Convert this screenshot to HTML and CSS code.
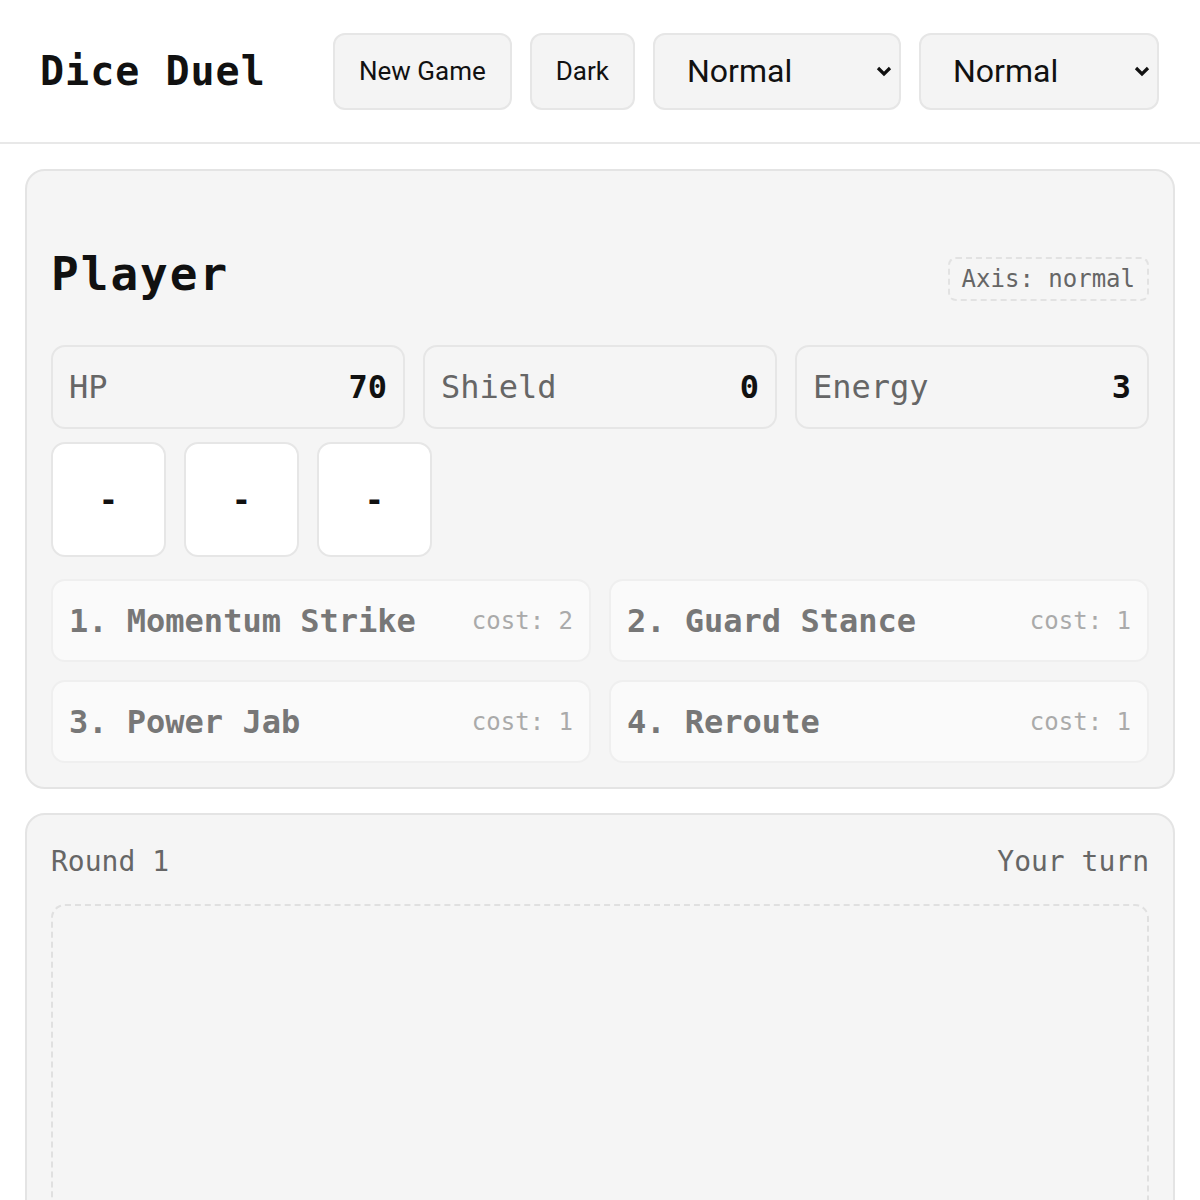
FILE: index.html
```html
<!DOCTYPE html>
<html>
<head lang="en">
    <meta charset="UTF-8">
    <title>Dice Duel</title>
    <link rel="stylesheet" href="styles.css">
</head>
<body>
    <header class="topbar">
        <h1 class="title">Dice Duel</h1>
        <div class="controls">
            <button class="btn">New Game</button>
            <button class="btn">Dark</button>
            <label class="pick">
                <select class="sel sel-level">
                    <option>Normal</option>
                    <option>Easy</option>
                    <option>Hard</option>
                </select>
                <svg class="chev" width="16" height="12" viewBox="0 0 16 12"><polyline points="2,3 8,9 14,3" fill="none" stroke="#111" stroke-width="3.2"/></svg>
            </label>
            <label class="pick">
                <select class="sel sel-speed">
                    <option>Normal</option>
                    <option>Fast</option>
                    <option>Slow</option>
                </select>
                <svg class="chev" width="16" height="12" viewBox="0 0 16 12"><polyline points="2,3 8,9 14,3" fill="none" stroke="#111" stroke-width="3.2"/></svg>
            </label>
        </div>
    </header>

    <main class="board">
        <section class="panel">
            <div class="panel-head">
                <h2 class="name">Player</h2>
                <span class="axis">Axis: normal</span>
            </div>
            <div class="stats">
                <div class="stat"><span class="stat-label">HP</span><span class="stat-value">70</span></div>
                <div class="stat"><span class="stat-label">Shield</span><span class="stat-value">0</span></div>
                <div class="stat"><span class="stat-label">Energy</span><span class="stat-value">3</span></div>
            </div>
            <div class="dice">
                <div class="die">-</div>
                <div class="die">-</div>
                <div class="die">-</div>
            </div>
            <div class="moves">
                <div class="move"><span class="move-name">1. Momentum Strike</span><span class="move-cost">cost: 2</span></div>
                <div class="move"><span class="move-name">2. Guard Stance</span><span class="move-cost">cost: 1</span></div>
                <div class="move"><span class="move-name">3. Power Jab</span><span class="move-cost">cost: 1</span></div>
                <div class="move"><span class="move-name">4. Reroute</span><span class="move-cost">cost: 1</span></div>
            </div>
        </section>

        <section class="panel">
            <div class="log-head">
                <span>Round 1</span>
                <span>Your turn</span>
            </div>
            <div class="log-box"></div>
        </section>
    </main>
</body>
</html>
```

FILE: styles.css
```css
*{
    margin:0;
    padding:0;
    box-sizing:border-box;
}
body{
    background:#fff;
    color:#111;
    font-family:"DejaVu Sans Mono","Liberation Mono",monospace;
}
.topbar{
    display:flex;
    align-items:center;
    justify-content:space-between;
    height:144px;
    padding:0 41px 0 40px;
    border-bottom:2px solid #e8e8e8;
}
.title{
    font-size:40px;
    font-weight:bold;
    letter-spacing:1px;
}
.controls{
    display:flex;
    gap:18px;
}
.btn,.sel{
    height:77px;
    background:#f4f4f4;
    border:2px solid #e6e6e6;
    border-radius:12px;
    color:#111;
    font-family:Roboto,"Noto Sans",sans-serif;
}
.btn{
    padding:0 24px;
    font-size:26px;
}
.pick{
    position:relative;
    display:block;
}
.sel{
    -webkit-appearance:none;
    appearance:none;
    padding:0 40px 0 32px;
    font-size:32px;
}
.chev{
    position:absolute;
    right:9px;
    top:32px;
    pointer-events:none;
}
.sel-level{
    width:248px;
}
.sel-speed{
    width:240px;
}
.board{
    display:flex;
    flex-direction:column;
    gap:24px;
    padding:25px;
}
.panel{
    background:#f5f5f5;
    border:2px solid #e4e4e4;
    border-radius:20px;
    padding:24px;
}
.panel-head{
    display:flex;
    align-items:flex-end;
    justify-content:space-between;
    margin-top:52px;
}
.name{
    font-size:46px;
    font-weight:bold;
    letter-spacing:2px;
}
.axis{
    border:2px dashed #e2e2e2;
    border-radius:8px;
    padding:6px 12px;
    font-size:24px;
    color:#666;
}
.stats{
    display:grid;
    grid-template-columns:repeat(3,1fr);
    gap:18px;
    margin-top:44px;
}
.stat{
    display:flex;
    align-items:center;
    justify-content:space-between;
    height:84px;
    padding:0 16px;
    border:2px solid #e6e6e6;
    border-radius:14px;
}
.stat-label{
    font-size:32px;
    color:#666;
}
.stat-value{
    font-size:32px;
    font-weight:bold;
    color:#111;
}
.dice{
    display:flex;
    gap:18px;
    margin-top:13px;
}
.die{
    display:flex;
    align-items:center;
    justify-content:center;
    width:115px;
    height:115px;
    background:#fff;
    border:2px solid #e6e6e6;
    border-radius:14px;
    font-size:32px;
    font-weight:bold;
}
.moves{
    display:grid;
    grid-template-columns:1fr 1fr;
    gap:18px;
    margin-top:22px;
}
.move{
    display:flex;
    align-items:center;
    justify-content:space-between;
    height:83px;
    padding:0 16px;
    background:#fafafa;
    border:2px solid #efefef;
    border-radius:14px;
}
.move-name{
    font-size:32px;
    font-weight:bold;
    color:#777;
}
.move-cost{
    font-size:24px;
    color:#aaa;
}
.log-head{
    display:flex;
    justify-content:space-between;
    font-size:28px;
    color:#666;
    margin-top:6px;
}
.log-box{
    height:400px;
    margin-top:26px;
    border:2px dashed #e0e0e0;
    border-radius:14px;
}
```
